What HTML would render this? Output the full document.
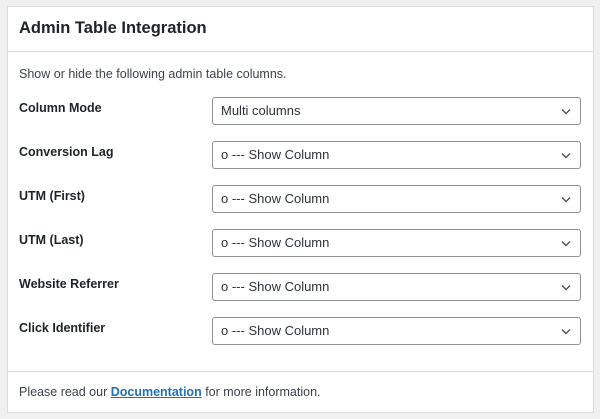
<!DOCTYPE html>
<html><head><style>
body{margin:0;background:#f0f0f1;width:600px;height:419px;font-family:"Liberation Sans",sans-serif;color:#1d2327;position:relative;overflow:hidden}
.card{position:absolute;left:7px;top:6px;width:585px;height:405px;background:#fff;border:1px solid #dcdcde}
.title{position:absolute;left:11px;top:12px;font-size:16.5px;font-weight:bold;color:#1d2327}
.hr{position:absolute;left:0;right:0;height:1px;background:#dcdcde}
.desc{position:absolute;left:11px;top:60px;font-size:12.5px;color:#3c434a}
.lbl{position:absolute;left:11px;font-size:12.5px;font-weight:bold}
.sel{position:absolute;left:204px;width:369px;height:28px;border:1px solid #8c8f94;border-radius:3px;box-sizing:border-box;font-size:13px;line-height:26px;padding-left:8px;color:#2c3338}
.sel svg{position:absolute;right:9px;top:10px}
.foot{position:absolute;left:11px;top:378px;font-size:12.5px;color:#3c434a}
.foot a{color:#2271b1;font-weight:bold;text-decoration:underline}
</style></head><body>
<div class="card">
<div class="title">Admin Table Integration</div>
<div class="hr" style="top:44px"></div>
<div class="desc">Show or hide the following admin table columns.</div>

<div class="lbl" style="top:94px">Column Mode</div>
<div class="sel" style="top:90px">Multi columns<svg width="10" height="7" viewBox="0 0 10 7"><path d="M1 1.5l4 4 4-4" fill="none" stroke="#50575e" stroke-width="1.5"/></svg></div>

<div class="lbl" style="top:138px">Conversion Lag</div>
<div class="sel" style="top:134px">o --- Show Column<svg width="10" height="7" viewBox="0 0 10 7"><path d="M1 1.5l4 4 4-4" fill="none" stroke="#50575e" stroke-width="1.5"/></svg></div>

<div class="lbl" style="top:182px">UTM (First)</div>
<div class="sel" style="top:178px">o --- Show Column<svg width="10" height="7" viewBox="0 0 10 7"><path d="M1 1.5l4 4 4-4" fill="none" stroke="#50575e" stroke-width="1.5"/></svg></div>

<div class="lbl" style="top:226px">UTM (Last)</div>
<div class="sel" style="top:222px">o --- Show Column<svg width="10" height="7" viewBox="0 0 10 7"><path d="M1 1.5l4 4 4-4" fill="none" stroke="#50575e" stroke-width="1.5"/></svg></div>

<div class="lbl" style="top:270px">Website Referrer</div>
<div class="sel" style="top:266px">o --- Show Column<svg width="10" height="7" viewBox="0 0 10 7"><path d="M1 1.5l4 4 4-4" fill="none" stroke="#50575e" stroke-width="1.5"/></svg></div>

<div class="lbl" style="top:314px">Click Identifier</div>
<div class="sel" style="top:310px">o --- Show Column<svg width="10" height="7" viewBox="0 0 10 7"><path d="M1 1.5l4 4 4-4" fill="none" stroke="#50575e" stroke-width="1.5"/></svg></div>

<div class="hr" style="top:364px"></div>
<div class="foot">Please read our <a>Documentation</a> for more information.</div>
</div>
</body></html>
